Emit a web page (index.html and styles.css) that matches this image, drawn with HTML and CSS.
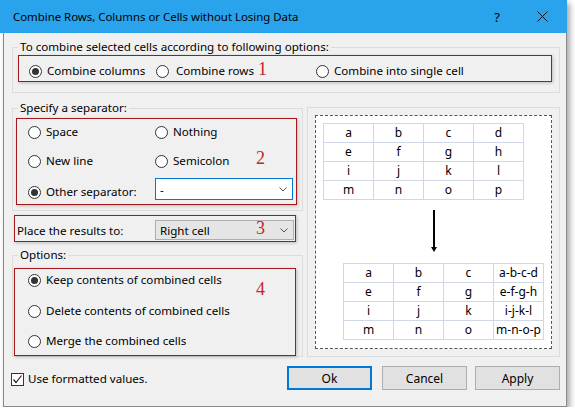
FILE: index.html
```html
<!DOCTYPE html>
<html lang="en">
<head>
    <meta charset="UTF-8">
    <title>Combine Rows, Columns or Cells without Losing Data</title>
    <link rel="stylesheet" href="styles.css">
</head>
<body>
    <div class="window">
        <div class="titlebar">
            <span class="title">Combine Rows, Columns or Cells without Losing Data</span>
            <span class="help">?</span>
            <svg class="close" width="11" height="11" viewBox="0 0 11 11">
                <path d="M0.5 0.5 L10.5 10.5 M10.5 0.5 L0.5 10.5" stroke="#111" stroke-width="1" fill="none"/>
            </svg>
        </div>
        <div class="content">
            <fieldset class="group group-combine">
                <legend>To combine selected cells according to following options:</legend>
                <div class="mark mark-combine">
                    <span class="radio radio-cols"><i class="circle on"></i>Combine columns</span>
                    <span class="radio radio-rows"><i class="circle"></i>Combine rows</span>
                    <span class="radio"><i class="circle"></i>Combine into single cell</span>
                    <span class="note note-1">1</span>
                </div>
            </fieldset>

            <div class="middle">
                <div class="left-col">
                    <fieldset class="group group-sep">
                        <legend>Specify a separator:</legend>
                        <div class="mark mark-sep">
                            <span class="radio"><i class="circle"></i>Space</span>
                            <span class="radio"><i class="circle"></i>Nothing</span>
                            <span class="radio"><i class="circle"></i>New line</span>
                            <span class="radio"><i class="circle"></i>Semicolon</span>
                            <span class="radio radio-other"><i class="circle on"></i>Other separator:</span>
                            <div class="select select-edit">
                                <span>-</span>
                                <svg width="8" height="5" viewBox="0 0 8 5"><path d="M0.5 0.5 L4 4 L7.5 0.5" stroke="#555" fill="none"/></svg>
                            </div>
                            <span class="note note-2">2</span>
                        </div>
                    </fieldset>

                    <div class="mark place-row">
                        <span class="place-label">Place the results to:</span>
                        <div class="select select-gray">
                            <span>Right cell</span>
                            <svg width="8" height="5" viewBox="0 0 8 5"><path d="M0.5 0.5 L4 4 L7.5 0.5" stroke="#555" fill="none"/></svg>
                        </div>
                        <span class="note note-3">3</span>
                    </div>

                    <fieldset class="group group-options">
                        <legend>Options:</legend>
                        <div class="mark mark-options">
                            <span class="radio"><i class="circle on"></i>Keep contents of combined cells</span>
                            <span class="radio"><i class="circle"></i>Delete contents of combined cells</span>
                            <span class="radio"><i class="circle"></i>Merge the combined cells</span>
                            <span class="note note-4">4</span>
                        </div>
                    </fieldset>
                </div>

                <div class="preview">
                    <div class="dashed">
                        <div class="grid">
                            <span>a</span><span>b</span><span>c</span><span>d</span>
                            <span>e</span><span>f</span><span>g</span><span>h</span>
                            <span>i</span><span>j</span><span>k</span><span>l</span>
                            <span>m</span><span>n</span><span>o</span><span>p</span>
                        </div>
                        <svg class="arrow" width="10" height="42" viewBox="0 0 10 42">
                            <line x1="5" y1="0" x2="5" y2="38" stroke="#000" stroke-width="2"/>
                            <polygon points="2,37 8,37 5,42" fill="#000"/>
                        </svg>
                        <div class="grid grid-result">
                            <span>a</span><span>b</span><span>c</span><span>a-b-c-d</span>
                            <span>e</span><span>f</span><span>g</span><span>e-f-g-h</span>
                            <span>i</span><span>j</span><span>k</span><span>i-j-k-l</span>
                            <span>m</span><span>n</span><span>o</span><span>m-n-o-p</span>
                        </div>
                    </div>
                </div>
            </div>

            <div class="footer">
                <span class="checkbox">
                    <svg width="11" height="11" viewBox="0 0 11 11"><path d="M1.5 5.5 L4 8.5 L9.5 1.5" stroke="#222" stroke-width="1.2" fill="none"/></svg>
                </span>
                <span class="check-label">Use formatted values.</span>
                <button class="btn btn-ok">Ok</button>
                <button class="btn btn-cancel">Cancel</button>
                <button class="btn btn-apply">Apply</button>
            </div>
        </div>
    </div>
</body>
</html>
```

FILE: styles.css
```css
* {
    box-sizing: border-box;
}
body {
    margin: 0;
    background-color: #fff;
    font-family: "Noto Sans", "Open Sans", sans-serif;
    font-size: 11.6px;
    color: #000;
}
.window {
    width: 564px;
    margin-left: 3px;
    background-color: #f0f0f0;
    border-left: 1px solid #3a9fe4;
    border-right: 1px solid #8a8a8a;
    border-bottom: 1px solid #8a8a8a;
    box-shadow: 3px 3px 6px rgba(0,0,0,0.35);
}
.titlebar {
    height: 33px;
    margin-left: -4px;
    margin-right: -1px;
    padding-left: 13px;
    background-color: #29a3eb;
    display: flex;
    align-items: center;
}
.title {
    font-size: 11.4px;
}
.help {
    margin-left: auto;
    margin-right: 37px;
    font-size: 13px;
}
.close {
    margin-right: 19px;
}
.content {
    padding: 0 6px 16px 8px;
}
.group {
    margin: 0;
    padding: 0;
    min-width: 0;
    border: 1px solid #dcdcdc;
}
.group legend {
    margin-left: 5px;
    padding: 0 2px;
    line-height: 16px;
}
.mark {
    position: relative;
    border: 1px solid #a3191b;
    box-shadow: 1px 1px 3px rgba(0,0,0,0.22);
}
.note {
    position: absolute;
    font-family: "Liberation Serif", serif;
    font-size: 18px;
    line-height: 18px;
    color: #c0272d;
}
.radio {
    display: flex;
    align-items: center;
    gap: 5px;
    line-height: 16px;
    white-space: nowrap;
}
.circle {
    width: 13px;
    height: 13px;
    flex: none;
    border: 1px solid #333;
    border-radius: 50%;
    background-color: #fff;
    display: flex;
    align-items: center;
    justify-content: center;
}
.circle.on::after {
    content: "";
    width: 7px;
    height: 7px;
    border-radius: 50%;
    background-color: #333;
}

/* top group */
.group-combine {
    margin-top: 6px;
}
.mark-combine {
    margin: 0 7px 10px 5px;
    padding: 7px 0 2px 10px;
    display: flex;
}
.radio-cols {
    width: 127px;
}
.radio-rows {
    width: 160px;
    gap: 7px;
}
.note-1 {
    left: 239px;
    top: 4px;
}

/* middle */
.middle {
    display: flex;
    align-items: flex-start;
    gap: 4px;
}
.left-col {
    width: 291px;
}
.group-sep {
    margin-top: 7px;
}
.mark-sep {
    margin: 2px 5px 5px 3px;
    padding: 5px 3px 4px 11px;
    display: grid;
    grid-template-columns: 127px 1fr;
    grid-template-rows: 29px 25px 22px;
    align-items: start;
}
.radio-other {
    align-self: end;
}
.select {
    display: flex;
    align-items: center;
    justify-content: space-between;
    padding: 0 5px 0 4px;
}
.select-edit {
    height: 22px;
    border: 1px solid #0078d7;
    background-color: #fff;
}
.note-2 {
    left: 239px;
    top: 30px;
}
.place-row {
    width: 282px;
    height: 27px;
    margin: 4px 0 0 2px;
    padding: 4px 0 1px 2px;
    display: flex;
    align-items: center;
}
.place-label {
    width: 138px;
}
.select-gray {
    width: 139px;
    height: 20px;
    border: 1px solid #adadad;
    background-color: #e5e5e5;
}
.note-3 {
    left: 241px;
    top: 3px;
}
.group-options {
    margin-top: 5px;
}
.mark-options {
    margin: 5px 6px 0 1px;
    padding: 3px 0 6px 13px;
    display: flex;
    flex-direction: column;
}
.mark-options .radio:nth-child(1) {
    margin-bottom: 15px;
}
.mark-options .radio:nth-child(2) {
    margin-bottom: 14px;
}
.note-4 {
    left: 241px;
    top: 11px;
}

/* preview */
.preview {
    width: 253px;
    height: 250px;
    margin-top: 14px;
    padding: 7px;
    border: 1px solid #dcdcdc;
}
.dashed {
    height: 234px;
    padding: 7px;
    border: 1px dashed #555;
    background-color: #fff;
    display: flex;
    flex-direction: column;
}
.grid {
    width: 201px;
    display: grid;
    grid-template-columns: repeat(4, 49px);
    grid-auto-rows: 18px;
    gap: 1px;
    padding: 1px;
    background-color: #d0d7e5;
}
.grid span {
    background-color: #fff;
    text-align: center;
    line-height: 18px;
    font-size: 12px;
}
.arrow {
    margin: 10px auto 0;
    display: block;
}
.grid-result {
    align-self: flex-end;
    margin-top: 11px;
}

/* footer */
.footer {
    height: 24px;
    margin-top: 9px;
    display: flex;
    align-items: center;
}
.checkbox {
    width: 13px;
    height: 13px;
    margin: 2px 0 0 -1px;
    border: 1px solid #333;
    background-color: #fff;
    display: flex;
    align-items: center;
    justify-content: center;
}
.check-label {
    margin-left: 4px;
}
.btn {
    width: 85px;
    height: 24px;
    padding: 0;
    border: 1px solid #adadad;
    background-color: #e1e1e1;
    font-family: inherit;
    font-size: 12px;
    color: #000;
}
.btn-ok {
    margin-left: auto;
    border: 2px solid #0078d7;
}
.btn-cancel {
    margin-left: 10px;
}
.btn-apply {
    margin-left: 8px;
}
```
